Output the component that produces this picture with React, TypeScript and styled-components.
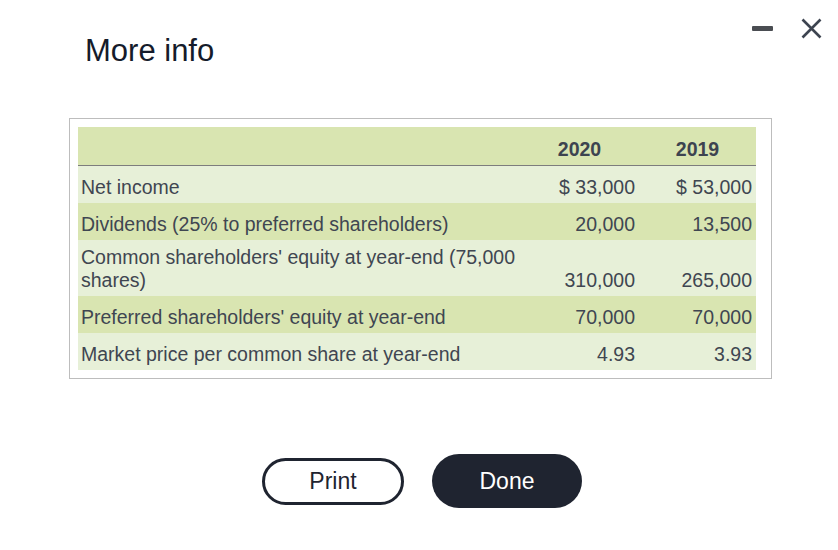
import React from "react";
import styled, { createGlobalStyle } from "styled-components";

const GlobalStyle = createGlobalStyle`
  html, body { margin: 0; padding: 0; background: #ffffff; }
  body { font-family: "Liberation Sans", Arial, sans-serif; }
  * { box-sizing: border-box; }
`;

const Page = styled.div`
  width: 838px;
  height: 550px;
  display: flex;
  flex-direction: column;
  background: #ffffff;
  overflow: hidden;
`;

const Header = styled.div`
  display: flex;
  justify-content: space-between;
  align-items: flex-start;
  padding: 18px 16px 0 85px;
`;

const Title = styled.h1`
  margin: 15px 0 0 0;
  font-size: 31px;
  line-height: 36px;
  font-weight: 400;
  color: #151b2b;
`;

const Controls = styled.div`
  display: flex;
  align-items: center;
  gap: 28px;
  height: 21px;
`;

const MinimizeButton = styled.button`
  width: 21px;
  height: 21px;
  padding: 0;
  border: none;
  background: transparent;
  display: flex;
  align-items: center;
  justify-content: center;
  cursor: pointer;
  &::before {
    content: "";
    display: block;
    width: 21px;
    height: 5px;
    border-radius: 1px;
    background: #4a4d52;
  }
`;

const CloseButton = styled.button`
  width: 21px;
  height: 21px;
  padding: 0;
  border: none;
  background: transparent;
  cursor: pointer;
  display: flex;
  align-items: center;
  justify-content: center;
`;

const InfoBox = styled.div`
  margin: 49px 0 0 69px;
  width: 703px;
  border: 1px solid #bdbdbd;
  padding: 8px 14px 8px 8px;
`;

const Table = styled.table`
  width: 678px;
  table-layout: fixed;
  border-collapse: separate;
  border-spacing: 0;
  font-size: 19.5px;
  line-height: 23px;
  color: #3f4651;
`;

const HeadCell = styled.th`
  background: #d9e5b1;
  font-weight: 700;
  text-align: center;
  padding: 11px 3px 4px;
  border-bottom: 1px solid #7d7d7d;
  color: #3d4450;
`;

const Row = styled.tr<{ $shade: "dark" | "light" }>`
  height: 37px;
  background: ${(p) => (p.$shade === "dark" ? "#d9e5b1" : "#e7f0d8")};
`;

const LabelCell = styled.td`
  text-align: left;
  vertical-align: bottom;
  padding: 6px 0 4px 3px;
`;

const NumCell = styled.td`
  text-align: right;
  vertical-align: bottom;
  padding: 6px 4px 4px 0;
  white-space: nowrap;
`;

const Actions = styled.div`
  display: flex;
  justify-content: center;
  align-items: center;
  gap: 28px;
  margin-top: 75px;
  padding-left: 6px;
`;

const PillButton = styled.button<{ $primary?: boolean }>`
  font-family: "Liberation Sans", Arial, sans-serif;
  font-size: 23px;
  cursor: pointer;
  display: flex;
  align-items: center;
  justify-content: center;
  width: ${(p) => (p.$primary ? "150px" : "142px")};
  height: ${(p) => (p.$primary ? "54px" : "47px")};
  border-radius: 27px;
  border: ${(p) => (p.$primary ? "none" : "3px solid #1f2430")};
  background: ${(p) => (p.$primary ? "#1f2430" : "#ffffff")};
  color: ${(p) => (p.$primary ? "#ffffff" : "#1f2430")};
`;

type Item = { label: string; y2020: string; y2019: string };

const rows: Item[] = [
  { label: "Net income", y2020: "$ 33,000", y2019: "$ 53,000" },
  { label: "Dividends (25% to preferred shareholders)", y2020: "20,000", y2019: "13,500" },
  {
    label: "Common shareholders' equity at year-end (75,000 shares)",
    y2020: "310,000",
    y2019: "265,000",
  },
  { label: "Preferred shareholders' equity at year-end", y2020: "70,000", y2019: "70,000" },
  { label: "Market price per common share at year-end", y2020: "4.93", y2019: "3.93" },
];

export default function App() {
  return (
    <>
      <GlobalStyle />
      <Page>
        <Header>
          <Title>More info</Title>
          <Controls>
            <MinimizeButton aria-label="Minimize" />
            <CloseButton aria-label="Close">
              <svg width="21" height="21" viewBox="0 0 21 21">
                <path
                  d="M1.5 1.5 L19.5 19.5 M19.5 1.5 L1.5 19.5"
                  stroke="#3d4450"
                  strokeWidth="2.6"
                  strokeLinecap="butt"
                />
              </svg>
            </CloseButton>
          </Controls>
        </Header>
        <InfoBox>
          <Table>
            <colgroup>
              <col style={{ width: 442 }} />
              <col style={{ width: 119 }} />
              <col style={{ width: 117 }} />
            </colgroup>
            <thead>
              <tr>
                <HeadCell />
                <HeadCell>2020</HeadCell>
                <HeadCell>2019</HeadCell>
              </tr>
            </thead>
            <tbody>
              {rows.map((r, i) => (
                <Row key={r.label} $shade={i % 2 === 0 ? "light" : "dark"}>
                  <LabelCell>{r.label}</LabelCell>
                  <NumCell>{r.y2020}</NumCell>
                  <NumCell>{r.y2019}</NumCell>
                </Row>
              ))}
            </tbody>
          </Table>
        </InfoBox>
        <Actions>
          <PillButton>Print</PillButton>
          <PillButton $primary>Done</PillButton>
        </Actions>
      </Page>
    </>
  );
}
